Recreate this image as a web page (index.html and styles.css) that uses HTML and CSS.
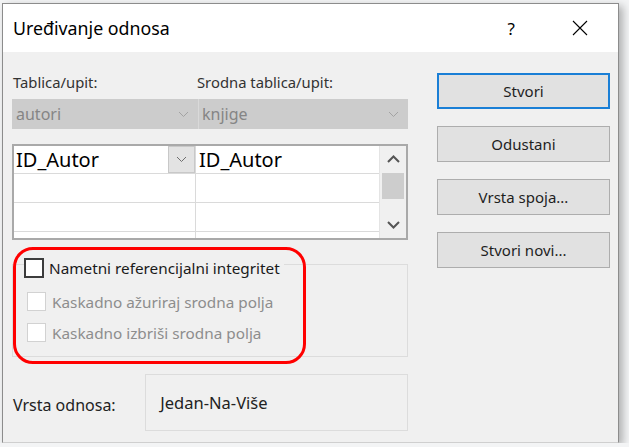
FILE: index.html
```html
<!DOCTYPE html>
<html lang="hr">
<head>
  <meta charset="UTF-8">
  <meta name="viewport" content="width=device-width, initial-scale=1.0">
  <title>Uređivanje odnosa</title>
  <link rel="stylesheet" href="styles.css">
</head>
<body>
  <div class="dialog">
    <div class="titlebar">
      <span class="title">Uređivanje odnosa</span>
      <span class="help">?</span>
      <svg class="close" width="16" height="16" viewBox="0 0 16 16">
        <path d="M1 1L15 15M15 1L1 15" stroke="#000" stroke-width="1.1" fill="none"/>
      </svg>
    </div>

    <div class="content">
      <div class="left">
        <div class="labels">
          <span class="label-main">Tablica/upit:</span>
          <span>Srodna tablica/upit:</span>
        </div>

        <div class="combos">
          <div class="combo combo-main">
            <span>autori</span>
            <svg width="11" height="7" viewBox="0 0 11 7"><path d="M1 1l4.5 4.5L10 1" stroke="#a3a3a3" fill="none"/></svg>
          </div>
          <div class="combo">
            <span>knjige</span>
            <svg width="11" height="7" viewBox="0 0 11 7"><path d="M1 1l4.5 4.5L10 1" stroke="#a3a3a3" fill="none"/></svg>
          </div>
        </div>

        <div class="fields">
          <div class="cells">
            <div class="row row-first">
              <div class="cell cell-main">
                <span>ID_Autor</span>
                <span class="cell-drop">
                  <svg width="11" height="7" viewBox="0 0 11 7"><path d="M1 1l4.5 4.5L10 1" stroke="#6e6e6e" fill="none"/></svg>
                </span>
              </div>
              <div class="cell">ID_Autor</div>
            </div>
            <div class="row">
              <div class="cell cell-main"></div>
              <div class="cell"></div>
            </div>
            <div class="row">
              <div class="cell cell-main"></div>
              <div class="cell"></div>
            </div>
            <div class="row">
              <div class="cell cell-main"></div>
              <div class="cell"></div>
            </div>
          </div>
          <div class="scrollbar">
            <div class="arrow">
              <svg width="13" height="8" viewBox="0 0 13 8"><path d="M1 7l5.5-5.5L12 7" stroke="#555" stroke-width="2" fill="none"/></svg>
            </div>
            <div class="thumb"></div>
            <div class="track"></div>
            <div class="arrow">
              <svg width="13" height="8" viewBox="0 0 13 8"><path d="M1 1l5.5 5.5L12 1" stroke="#555" stroke-width="2" fill="none"/></svg>
            </div>
          </div>
        </div>

        <div class="options">
          <div class="groupbox">
            <label class="check check-legend">
              <span class="box box-on"></span>
              <span>Nametni referencijalni integritet</span>
            </label>
            <label class="check check-off">
              <span class="box"></span>
              <span>Kaskadno ažuriraj srodna polja</span>
            </label>
            <label class="check check-off check-last">
              <span class="box"></span>
              <span>Kaskadno izbriši srodna polja</span>
            </label>
          </div>
          <div class="highlight"></div>
        </div>

        <div class="reltype">
          <span class="reltype-label">Vrsta odnosa:</span>
          <div class="reltype-box">Jedan-Na-Više</div>
        </div>
      </div>

      <div class="actions">
        <button class="btn btn-default">Stvori</button>
        <button class="btn">Odustani</button>
        <button class="btn">Vrsta spoja...</button>
        <button class="btn">Stvori novi...</button>
      </div>
    </div>
  </div>
</body>
</html>
```

FILE: styles.css
```css
body {
  margin: 0;
  background: #f3f4f5;
  font-family: "Noto Sans", "Liberation Sans", sans-serif;
  color: #1e1e1e;
}

.dialog {
  margin: 3px 0 0 2px;
  width: 617px;
  height: 440px;
  box-sizing: border-box;
  border: 1px solid #8c8c8c;
  border-bottom-color: #cfcfcf;
  background: #f0f0f0;
  box-shadow: 4px 3px 8px rgba(0,0,0,0.28);
}

/* barre de titre */
.titlebar {
  height: 48px;
  background: #fff;
  display: flex;
  align-items: center;
  padding-left: 10px;
}
.title {
  flex: 1;
  font-size: 17.8px;
  color: #000;
}
.help {
  font-size: 17px;
  color: #000;
  margin-right: 57px;
}
.close {
  margin-right: 30px;
}

.content {
  display: flex;
  padding: 0 8px 0 9px;
}
.left {
  width: 396px;
}

.labels {
  display: flex;
  margin-top: 20px;
  height: 20px;
  align-items: center;
  font-size: 14.8px;
  color: #333;
}
.label-main {
  width: 184px;
  padding-left: 1px;
}

.combos {
  display: flex;
  margin-top: 7px;
  height: 30px;
  background: #cccccc;
}
.combo {
  flex: 1;
  display: flex;
  align-items: center;
  justify-content: space-between;
  padding: 0 9px 0 3px;
  font-size: 16px;
  color: #858585;
}
.combo-main {
  flex: none;
  width: 173px;
  padding-left: 4px;
  border-right: 1px solid #d9d9d9;
}

/* grille des champs */
.fields {
  display: flex;
  margin-top: 15px;
  height: 96px;
  box-sizing: border-box;
  border: 2px solid #a9a9a9;
  background: #fff;
}
.cells {
  flex: 1;
  overflow: hidden;
}
.row {
  display: flex;
  height: 29px;
  box-sizing: border-box;
  border-bottom: 1px solid #dadada;
}
.row-first {
  height: 28px;
}
.cell {
  flex: 1;
  display: flex;
  align-items: center;
  padding-left: 3px;
  font-size: 20px;
  color: #000;
}
.cell-main {
  flex: none;
  width: 182px;
  box-sizing: border-box;
  padding-left: 2px;
  border-right: 1px solid #dadada;
}
.cell-drop {
  margin-left: auto;
  width: 27px;
  height: 100%;
  box-sizing: border-box;
  border: 1px solid #c8c8c8;
  background: #e3e3e3;
  display: flex;
  align-items: center;
  justify-content: center;
}
.scrollbar {
  width: 26px;
  display: flex;
  flex-direction: column;
  background: #f0f0f0;
  border-left: 1px solid #e4e4e4;
}
.arrow {
  height: 26px;
  display: flex;
  align-items: center;
  justify-content: center;
}
.thumb {
  height: 26px;
  margin: 1px 2px 0;
  background: #cdcdcd;
}
.track {
  flex: 1;
}

/* options */
.options {
  position: relative;
  height: 124px;
  box-sizing: border-box;
  padding-top: 24px;
}
.groupbox {
  height: 93px;
  box-sizing: border-box;
  border: 1px solid #dcdcdc;
}
.check {
  display: flex;
  align-items: center;
  gap: 6px;
  height: 19px;
  margin: 14px 0 0 14px;
  font-size: 15.3px;
  color: #8d8d8d;
}
.check-legend {
  width: fit-content;
  height: 20px;
  margin: -7px 0 0 11px;
  gap: 5px;
  padding-right: 4px;
  background: #f0f0f0;
  color: #1a1a1a;
}
.check-last {
  margin-top: 12px;
}
.box {
  width: 19px;
  height: 19px;
  box-sizing: border-box;
  border: 1.5px solid #d2d2d2;
  background: #fff;
}
.box-on {
  width: 20px;
  height: 20px;
  border: 2px solid #3c3c3c;
}
.highlight {
  position: absolute;
  left: 1px;
  top: 7px;
  width: 293px;
  height: 117px;
  box-sizing: border-box;
  border: 3px solid #f00;
  border-radius: 20px;
}

.reltype {
  display: flex;
  align-items: center;
  margin-top: 10px;
  height: 57px;
}
.reltype-label {
  width: 133px;
  padding: 5px 0 0 1px;
  font-size: 16px;
  color: #222;
}
.reltype-box {
  width: 264px;
  height: 57px;
  box-sizing: border-box;
  border: 1px solid #dcdcdc;
  display: flex;
  align-items: center;
  padding-left: 14px;
  font-size: 16.5px;
  color: #222;
}

/* boutons */
.actions {
  display: flex;
  flex-direction: column;
  gap: 17px;
  margin: 21px 0 0 29px;
}
.btn {
  width: 173px;
  height: 36px;
  box-sizing: border-box;
  border: 1px solid #adadad;
  background: #e1e1e1;
  font-family: inherit;
  font-size: 15px;
  color: #1e1e1e;
  padding: 0;
}
.btn-default {
  border: 2px solid #1a7fd6;
}
```
